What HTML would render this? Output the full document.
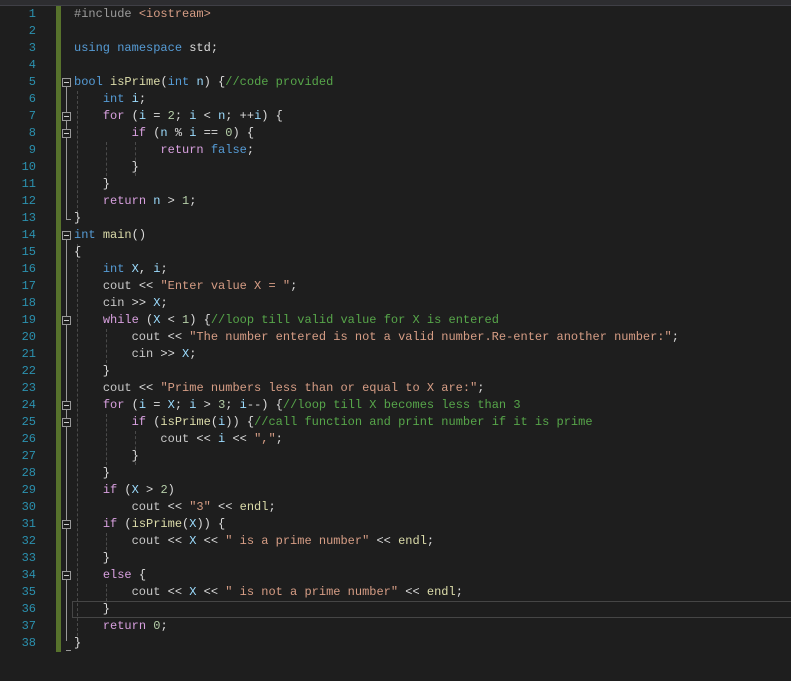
<!DOCTYPE html>
<html><head><meta charset="utf-8"><style>
body{margin:0;width:791px;height:681px;background:#1e1e1e;overflow:hidden;position:relative;font-family:"Liberation Mono",monospace;font-size:12px}
.top{position:absolute;left:0;top:0;width:791px;height:5px;background:#2d2d30;border-bottom:1px solid #3f3f46}
.ln{position:absolute;left:0;top:6px;width:36px;text-align:right;color:#2b91af;line-height:17px;white-space:pre}
.code{position:absolute;left:74px;top:6px;margin:0;font:inherit;line-height:17px;color:#dcdcdc;white-space:pre}
.bar{position:absolute;left:56px;top:6px;width:5px;height:646px;background:#57722c}
.k{color:#569cd6}.c{color:#d8a0df}.s{color:#d69d85}.m{color:#57a64a}.f{color:#dcdcaa}.v{color:#9cdcfe}.n{color:#b5cea8}.p{color:#9b9b9b}.o{color:#c8c8c8}
.fb{position:absolute;left:62px;width:7px;height:7px;border:1px solid #999;background:#1e1e1e}
.fb:after{content:"";position:absolute;left:1px;top:3px;width:5px;height:1px;background:#ccc}
.fl{position:absolute;left:66px;width:1px;background:#999}
.fe{position:absolute;left:66px;width:5px;height:1px;background:#999}
.g{position:absolute;width:0;border-left:1px dashed #4a4a4a}
.cur{position:absolute;left:72px;top:601px;width:730px;height:15px;border:1px solid #464646}
</style></head><body>
<div class="top"></div>
<div class="bar"></div>
<div class="cur"></div>
<div class="ln">1
2
3
4
5
6
7
8
9
10
11
12
13
14
15
16
17
18
19
20
21
22
23
24
25
26
27
28
29
30
31
32
33
34
35
36
37
38</div>
<div class="fl" style="top:82px;height:138px"></div><div class="fe" style="top:219px"></div>
<div class="fl" style="top:235px;height:406px"></div><div class="fe" style="top:650px"></div>
<div class="g" style="left:77px;top:91px;height:127px"></div>
<div class="g" style="left:77px;top:244px;height:402px"></div>
<div class="g" style="left:106px;top:142px;height:34px"></div>
<div class="g" style="left:135px;top:142px;height:34px"></div>
<div class="g" style="left:106px;top:329px;height:34px"></div>
<div class="g" style="left:106px;top:414px;height:51px"></div>
<div class="g" style="left:135px;top:431px;height:34px"></div>
<div class="g" style="left:106px;top:533px;height:17px"></div>
<div class="g" style="left:106px;top:584px;height:17px"></div>
<div class="fb" style="top:78px"></div>
<div class="fb" style="top:112px"></div>
<div class="fb" style="top:129px"></div>
<div class="fb" style="top:231px"></div>
<div class="fb" style="top:316px"></div>
<div class="fb" style="top:401px"></div>
<div class="fb" style="top:418px"></div>
<div class="fb" style="top:520px"></div>
<div class="fb" style="top:571px"></div>
<pre class="code"><span class="p">#include</span> <span class="s">&lt;iostream&gt;</span>

<span class="k">using</span> <span class="k">namespace</span> std;

<span class="k">bool</span> <span class="f">isPrime</span>(<span class="k">int</span> <span class="v">n</span>) {<span class="m">//code provided</span>
    <span class="k">int</span> <span class="v">i</span>;
    <span class="c">for</span> (<span class="v">i</span> = <span class="n">2</span>; <span class="v">i</span> &lt; <span class="v">n</span>; ++<span class="v">i</span>) {
        <span class="c">if</span> (<span class="v">n</span> % <span class="v">i</span> == <span class="n">0</span>) {
            <span class="c">return</span> <span class="k">false</span>;
        }
    }
    <span class="c">return</span> <span class="v">n</span> &gt; <span class="n">1</span>;
}
<span class="k">int</span> <span class="f">main</span>()
{
    <span class="k">int</span> <span class="v">X</span>, <span class="v">i</span>;
    <span class="o">cout</span> &lt;&lt; <span class="s">"Enter value X = "</span>;
    <span class="o">cin</span> &gt;&gt; <span class="v">X</span>;
    <span class="c">while</span> (<span class="v">X</span> &lt; <span class="n">1</span>) {<span class="m">//loop till valid value for X is entered</span>
        <span class="o">cout</span> &lt;&lt; <span class="s">"The number entered is not a valid number.Re-enter another number:"</span>;
        <span class="o">cin</span> &gt;&gt; <span class="v">X</span>;
    }
    <span class="o">cout</span> &lt;&lt; <span class="s">"Prime numbers less than or equal to X are:"</span>;
    <span class="c">for</span> (<span class="v">i</span> = <span class="v">X</span>; <span class="v">i</span> &gt; <span class="n">3</span>; <span class="v">i</span>--) {<span class="m">//loop till X becomes less than 3</span>
        <span class="c">if</span> (<span class="f">isPrime</span>(<span class="v">i</span>)) {<span class="m">//call function and print number if it is prime</span>
            <span class="o">cout</span> &lt;&lt; <span class="v">i</span> &lt;&lt; <span class="s">","</span>;
        }
    }
    <span class="c">if</span> (<span class="v">X</span> &gt; <span class="n">2</span>)
        <span class="o">cout</span> &lt;&lt; <span class="s">"3"</span> &lt;&lt; <span class="f">endl</span>;
    <span class="c">if</span> (<span class="f">isPrime</span>(<span class="v">X</span>)) {
        <span class="o">cout</span> &lt;&lt; <span class="v">X</span> &lt;&lt; <span class="s">" is a prime number"</span> &lt;&lt; <span class="f">endl</span>;
    }
    <span class="c">else</span> {
        <span class="o">cout</span> &lt;&lt; <span class="v">X</span> &lt;&lt; <span class="s">" is not a prime number"</span> &lt;&lt; <span class="f">endl</span>;
    }
    <span class="c">return</span> <span class="n">0</span>;
}</pre>
</body></html>
